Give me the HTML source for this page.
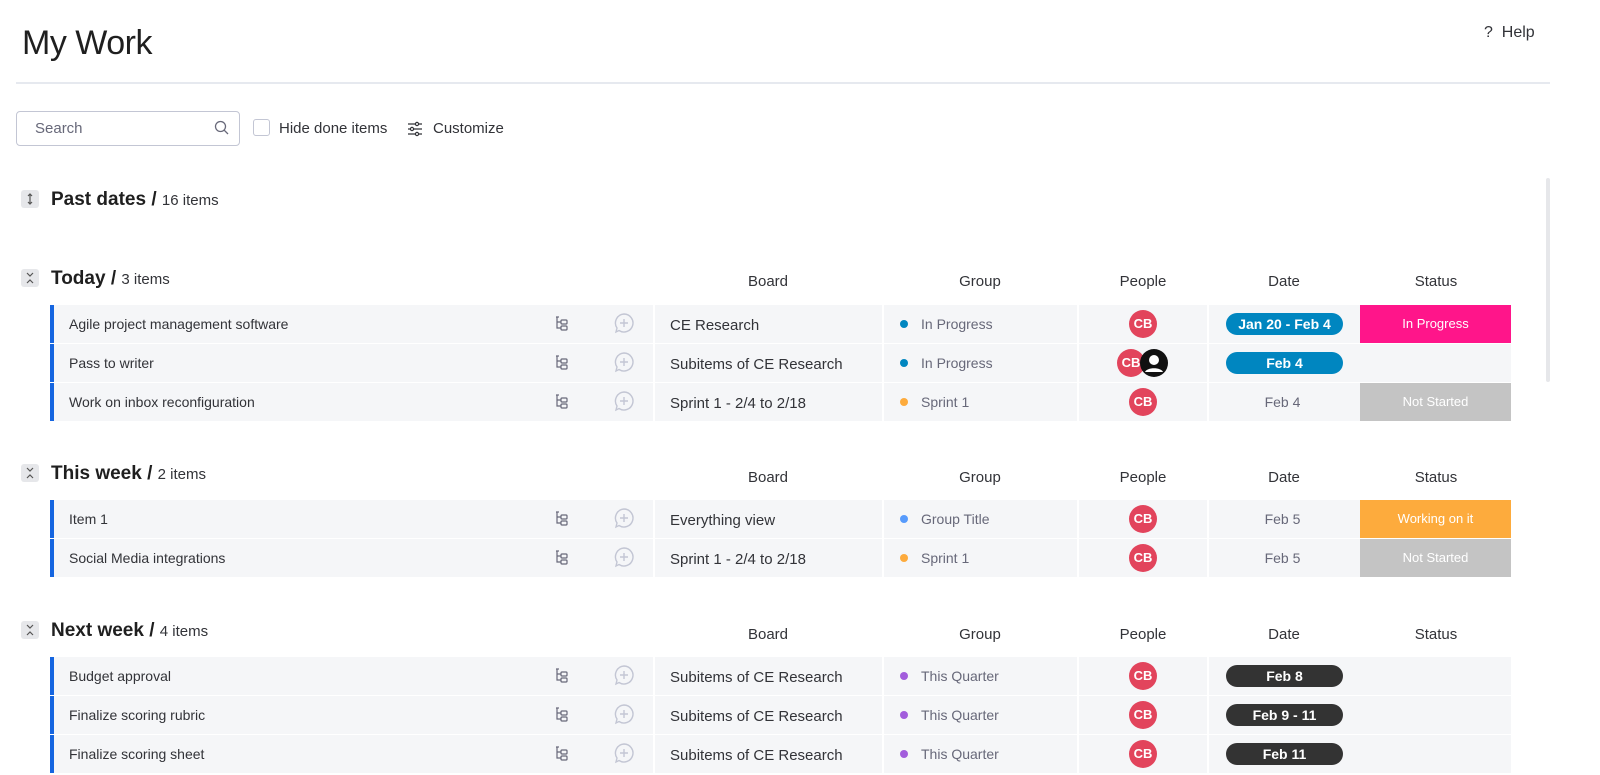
<!DOCTYPE html>
<html><head><meta charset="utf-8"><style>
*{box-sizing:border-box;margin:0;padding:0}
body{width:1600px;height:770px;overflow:hidden;background:#fff;font-family:"Liberation Sans",sans-serif;color:#323338;position:relative}
.abs{position:absolute}
h1{position:absolute;left:22px;top:24px;font-size:34px;font-weight:400;letter-spacing:-0.5px;color:#1f1f1f}
.help{left:1484px;top:24px;font-size:16px;color:#323338}
.divider{left:16px;top:82px;width:1534px;height:2px;background:#e6e9ef}
.search{left:16px;top:111px;width:224px;height:35px;border:1px solid #c3c6d4;border-radius:4px;font-size:15px;color:#676879;padding:8px 0 0 18px}
.chk{left:253px;top:119px;width:17px;height:17px;border:1px solid #c3c6d4;border-radius:3px}
.t15{font-size:15px;color:#323338}
.grp{font-size:19px;font-weight:700;color:#1f1f1f}
.grp span{font-weight:400;font-size:15px;color:#323338}
.tog{width:18px;height:18px;background:#e6e7ea;border-radius:3px}
.hdr{font-size:15px;color:#323338;text-align:center}
.row{position:absolute;left:50px;width:1461px;height:38px;background:#f5f6f8;border-left:4px solid #1565e0}
.row div{position:absolute;top:0;height:38px;line-height:38px}
.name{left:15px;font-size:14px;color:#323338}
.sep{width:2px;background:#fff}
.board{left:616px;font-size:15px;color:#323338;top:2px !important}
.gtxt{left:867px;font-size:14px;color:#676879}
.dot{width:8px;height:8px !important;border-radius:50%;top:15px !important}
.av{width:28px;height:28px !important;border-radius:50%;background:#e2445c;color:#fff;font-size:13px;font-weight:700;text-align:center;line-height:28px !important;top:5px !important}
.pill{top:8px !important;height:22px !important;line-height:22px !important;width:117px;border-radius:11px;color:#fff;font-size:14px;font-weight:700;text-align:center}
.dtxt{left:1153px;width:151px;text-align:center;font-size:14px;color:#676879}
.st{left:1306px;width:151px;text-align:center;font-size:13px;color:#fff}
</style></head><body>
<svg width="0" height="0" style="position:absolute"><defs>
<g id="sub" fill="none" stroke="#676879" stroke-width="1.2"><path d="M2 1v11h4M2 6h4"/><rect x="6" y="4" width="6" height="4" rx="1"/><rect x="6" y="10" width="6" height="4" rx="1"/><path d="M1 1h3"/></g>
<g id="upd" fill="none" stroke="#c3c6d4" stroke-width="1.4"><path d="M10 1a9 9 0 1 1-5 16.5L2 19l1-4A9 9 0 0 1 10 1z"/><path d="M10 6v8M6 10h8"/></g>
<g id="col"><rect width="18" height="18" rx="3" fill="#e6e7ea"/><path d="M6 4l3 3 3-3M6 14l3-3 3 3" fill="none" stroke="#555" stroke-width="1.2"/></g>
<g id="exp"><rect width="18" height="18" rx="3" fill="#e6e7ea"/><path d="M9 4v10M7 6l2-2 2 2M7 12l2 2 2-2" fill="none" stroke="#555" stroke-width="1.2"/></g>
</defs></svg>
<h1>My Work</h1>
<div class="abs help">?&nbsp;&nbsp;Help</div>
<div class="abs divider"></div>
<div class="abs search">Search</div>
<svg class="abs" style="left:214px;top:120px" width="16" height="16" viewBox="0 0 16 16"><circle cx="6.5" cy="6.5" r="5" fill="none" stroke="#676879" stroke-width="1.3"/><path d="M10.2 10.2L14 14" stroke="#676879" stroke-width="1.3"/></svg>
<div class="abs chk"></div>
<div class="abs t15" style="left:279px;top:120px">Hide done items</div>
<svg class="abs" style="left:407px;top:121px" width="16" height="16" viewBox="0 0 16 16" fill="none" stroke="#323338" stroke-width="1.2"><path d="M1 3h14M1 8h14M1 13h14"/><circle cx="10" cy="3" r="1.6" fill="#fff"/><circle cx="5" cy="8" r="1.6" fill="#fff"/><circle cx="10" cy="13" r="1.6" fill="#fff"/></svg>
<div class="abs t15" style="left:433px;top:120px">Customize</div>
<div class="abs" style="left:1546px;top:178px;width:4px;height:204px;background:#e6e7ea;border-radius:2px"></div>

<svg class="abs" style="left:21px;top:190px" width="18" height="18"><use href="#exp"/></svg>
<div class="abs grp" style="left:51px;top:189px">Past dates / <span>16 items</span></div>

<!-- Today -->
<svg class="abs" style="left:21px;top:269px" width="18" height="18"><use href="#col"/></svg>
<div class="abs grp" style="left:51px;top:268px">Today / <span>3 items</span></div>
<div class="abs hdr" style="left:718px;top:273px;width:100px">Board</div>
<div class="abs hdr" style="left:930px;top:273px;width:100px">Group</div>
<div class="abs hdr" style="left:1093px;top:273px;width:100px">People</div>
<div class="abs hdr" style="left:1234px;top:273px;width:100px">Date</div>
<div class="abs hdr" style="left:1386px;top:273px;width:100px">Status</div>

<div class="row" style="top:305px"><div class="name">Agile project management software</div><div class="sep" style="left:599px"></div><div class="board">CE Research</div><div class="sep" style="left:828px"></div><div class="dot" style="left:846px;background:#0086c0"></div><div class="gtxt">In Progress</div><div class="sep" style="left:1023px"></div><div class="av" style="left:1075px">CB</div><div class="sep" style="left:1153px"></div><div class="pill" style="left:1172px;background:#0086c0">Jan 20 - Feb 4</div><div class="st" style="background:#ff158a">In Progress</div></div>
<div class="row" style="top:344px"><div class="name">Pass to writer</div><div class="sep" style="left:599px"></div><div class="board">Subitems of CE Research</div><div class="sep" style="left:828px"></div><div class="dot" style="left:846px;background:#0086c0"></div><div class="gtxt">In Progress</div><div class="sep" style="left:1023px"></div><div class="av" style="left:1063px">CB</div><div class="av" style="left:1086px;background:#111">
<svg width="28" height="28" viewBox="0 0 28 28" style="display:block"><circle cx="14" cy="11" r="5" fill="#fff"/><path d="M5 23c2-5 16-5 18 0" fill="#fff"/></svg></div><div class="sep" style="left:1153px"></div><div class="pill" style="left:1172px;background:#0086c0">Feb 4</div></div>
<div class="row" style="top:383px"><div class="name">Work on inbox reconfiguration</div><div class="sep" style="left:599px"></div><div class="board">Sprint 1 - 2/4 to 2/18</div><div class="sep" style="left:828px"></div><div class="dot" style="left:846px;background:#fdab3d"></div><div class="gtxt">Sprint 1</div><div class="sep" style="left:1023px"></div><div class="av" style="left:1075px">CB</div><div class="sep" style="left:1153px"></div><div class="dtxt">Feb 4</div><div class="st" style="background:#c4c4c4">Not Started</div></div>

<!-- This week -->
<svg class="abs" style="left:21px;top:464px" width="18" height="18"><use href="#col"/></svg>
<div class="abs grp" style="left:51px;top:463px">This week / <span>2 items</span></div>
<div class="abs hdr" style="left:718px;top:469px;width:100px">Board</div>
<div class="abs hdr" style="left:930px;top:469px;width:100px">Group</div>
<div class="abs hdr" style="left:1093px;top:469px;width:100px">People</div>
<div class="abs hdr" style="left:1234px;top:469px;width:100px">Date</div>
<div class="abs hdr" style="left:1386px;top:469px;width:100px">Status</div>
<div class="row" style="top:500px"><div class="name">Item 1</div><div class="sep" style="left:599px"></div><div class="board">Everything view</div><div class="sep" style="left:828px"></div><div class="dot" style="left:846px;background:#579bfc"></div><div class="gtxt">Group Title</div><div class="sep" style="left:1023px"></div><div class="av" style="left:1075px">CB</div><div class="sep" style="left:1153px"></div><div class="dtxt">Feb 5</div><div class="st" style="background:#fdab3d">Working on it</div></div>
<div class="row" style="top:539px"><div class="name">Social Media integrations</div><div class="sep" style="left:599px"></div><div class="board">Sprint 1 - 2/4 to 2/18</div><div class="sep" style="left:828px"></div><div class="dot" style="left:846px;background:#fdab3d"></div><div class="gtxt">Sprint 1</div><div class="sep" style="left:1023px"></div><div class="av" style="left:1075px">CB</div><div class="sep" style="left:1153px"></div><div class="dtxt">Feb 5</div><div class="st" style="background:#c4c4c4">Not Started</div></div>

<!-- Next week -->
<svg class="abs" style="left:21px;top:621px" width="18" height="18"><use href="#col"/></svg>
<div class="abs grp" style="left:51px;top:620px">Next week / <span>4 items</span></div>
<div class="abs hdr" style="left:718px;top:626px;width:100px">Board</div>
<div class="abs hdr" style="left:930px;top:626px;width:100px">Group</div>
<div class="abs hdr" style="left:1093px;top:626px;width:100px">People</div>
<div class="abs hdr" style="left:1234px;top:626px;width:100px">Date</div>
<div class="abs hdr" style="left:1386px;top:626px;width:100px">Status</div>
<div class="row" style="top:657px"><div class="name">Budget approval</div><div class="sep" style="left:599px"></div><div class="board">Subitems of CE Research</div><div class="sep" style="left:828px"></div><div class="dot" style="left:846px;background:#a25ddc"></div><div class="gtxt">This Quarter</div><div class="sep" style="left:1023px"></div><div class="av" style="left:1075px">CB</div><div class="sep" style="left:1153px"></div><div class="pill" style="left:1172px;background:#333">Feb 8</div></div>
<div class="row" style="top:696px"><div class="name">Finalize scoring rubric</div><div class="sep" style="left:599px"></div><div class="board">Subitems of CE Research</div><div class="sep" style="left:828px"></div><div class="dot" style="left:846px;background:#a25ddc"></div><div class="gtxt">This Quarter</div><div class="sep" style="left:1023px"></div><div class="av" style="left:1075px">CB</div><div class="sep" style="left:1153px"></div><div class="pill" style="left:1172px;background:#333">Feb 9 - 11</div></div>
<div class="row" style="top:735px"><div class="name">Finalize scoring sheet</div><div class="sep" style="left:599px"></div><div class="board">Subitems of CE Research</div><div class="sep" style="left:828px"></div><div class="dot" style="left:846px;background:#a25ddc"></div><div class="gtxt">This Quarter</div><div class="sep" style="left:1023px"></div><div class="av" style="left:1075px">CB</div><div class="sep" style="left:1153px"></div><div class="pill" style="left:1172px;background:#333">Feb 11</div></div>

<svg class="abs" style="left:555px;top:316px" width="14" height="16"><use href="#sub"/></svg>
<svg class="abs" style="left:614px;top:313px" width="21" height="21"><use href="#upd"/></svg>
<svg class="abs" style="left:555px;top:355px" width="14" height="16"><use href="#sub"/></svg>
<svg class="abs" style="left:614px;top:352px" width="21" height="21"><use href="#upd"/></svg>
<svg class="abs" style="left:555px;top:394px" width="14" height="16"><use href="#sub"/></svg>
<svg class="abs" style="left:614px;top:391px" width="21" height="21"><use href="#upd"/></svg>
<svg class="abs" style="left:555px;top:511px" width="14" height="16"><use href="#sub"/></svg>
<svg class="abs" style="left:614px;top:508px" width="21" height="21"><use href="#upd"/></svg>
<svg class="abs" style="left:555px;top:550px" width="14" height="16"><use href="#sub"/></svg>
<svg class="abs" style="left:614px;top:547px" width="21" height="21"><use href="#upd"/></svg>
<svg class="abs" style="left:555px;top:668px" width="14" height="16"><use href="#sub"/></svg>
<svg class="abs" style="left:614px;top:665px" width="21" height="21"><use href="#upd"/></svg>
<svg class="abs" style="left:555px;top:707px" width="14" height="16"><use href="#sub"/></svg>
<svg class="abs" style="left:614px;top:704px" width="21" height="21"><use href="#upd"/></svg>
<svg class="abs" style="left:555px;top:746px" width="14" height="16"><use href="#sub"/></svg>
<svg class="abs" style="left:614px;top:743px" width="21" height="21"><use href="#upd"/></svg>
</body></html>
